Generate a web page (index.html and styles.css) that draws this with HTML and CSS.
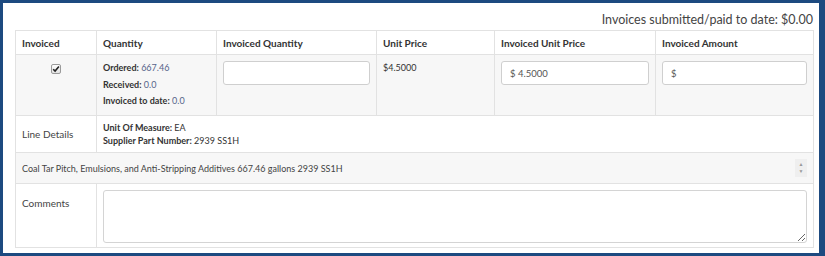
FILE: index.html
```html
<!doctype html>
<html lang="en">

<head>
    <meta charset="UTF-8">
    <title>Invoice line</title>
    <link rel="stylesheet" href="styles.css">
</head>

<body>
    <div class="frame">
        <div class="summary">Invoices submitted/paid to date: $0.00</div>
        <table class="lines">
            <colgroup>
                <col style="width:81px">
                <col style="width:120px">
                <col style="width:160px">
                <col style="width:118px">
                <col style="width:161px">
                <col style="width:158px">
            </colgroup>
            <thead>
                <tr>
                    <th>Invoiced</th>
                    <th>Quantity</th>
                    <th>Invoiced Quantity</th>
                    <th>Unit Price</th>
                    <th>Invoiced Unit Price</th>
                    <th>Invoiced Amount</th>
                </tr>
            </thead>
            <tbody>
                <tr class="item">
                    <td class="center">
                        <span class="check">
                            <svg width="8" height="8" viewBox="0 0 8 8"><path d="M1.2 4.2 L3.1 6.1 L6.9 1.6" fill="none" stroke="#222" stroke-width="1.6"/></svg>
                        </span>
                    </td>
                    <td class="qty">
                        <div><b>Ordered:</b> <span class="val">667.46</span></div>
                        <div><b>Received:</b> <span class="val">0.0</span></div>
                        <div><b>Invoiced to date:</b> <span class="val">0.0</span></div>
                    </td>
                    <td><input class="field" type="text" value=""></td>
                    <td class="qty">$4.5000</td>
                    <td><input class="field" type="text" value="$ 4.5000"></td>
                    <td><input class="field" type="text" value="$"></td>
                </tr>
                <tr class="details">
                    <td class="label middle">Line Details</td>
                    <td colspan="5">
                        <div><b>Unit Of Measure:</b> EA</div>
                        <div><b>Supplier Part Number:</b> 2939 SS1H</div>
                    </td>
                </tr>
                <tr class="desc">
                    <td colspan="6">
                        <div class="desc-box">
                            <span>Coal Tar Pitch, Emulsions, and Anti-Stripping Additives 667.46 gallons 2939 SS1H</span>
                            <span class="spin">&#9650;<br>&#9660;</span>
                        </div>
                    </td>
                </tr>
                <tr class="comments">
                    <td class="label">Comments</td>
                    <td colspan="5"><textarea class="note"></textarea></td>
                </tr>
            </tbody>
        </table>
    </div>
</body>

</html>
```

FILE: styles.css
```css
* {
    margin: 0;
    padding: 0;
    box-sizing: border-box;
}

body {
    font-family: Lato, "Open Sans", sans-serif;
    color: #333;
    background: #fff;
}

.frame {
    width: 825px;
    height: 256px;
    border-style: solid;
    border-color: #1d4a80;
    border-width: 3px 6px 3px 3px;
    padding: 0 6px 0 12px;
}

.summary {
    text-align: right;
    font-size: 12.5px;
    line-height: 17px;
    padding-top: 8px;
    height: 27px;
    color: #444;
}

.lines {
    width: 798px;
    table-layout: fixed;
    border-collapse: collapse;
    font-size: 9px;
}

.lines th,
.lines td {
    border: 1px solid #e2e2e2;
    text-align: left;
    vertical-align: top;
    padding: 5px 6px;
    line-height: 13px;
}

.lines th {
    font-size: 10px;
    font-weight: bold;
    height: 24px;
    padding: 6px 6px 5px;
    line-height: 12px;
}

.lines .label {
    font-size: 10px;
    color: #444;
}

.lines .center {
    text-align: center;
}

.lines .middle {
    vertical-align: middle;
}

/* striped rows */
.item td,
.desc td {
    background: #f7f7f7;
}

.item td {
    height: 61px;
}

.qty {
    line-height: 16.5px !important;
    padding-top: 5px !important;
}

.qty b,
.details b {
    color: #333;
}

.val {
    color: #56648a;
}

.check {
    display: inline-block;
    width: 10px;
    height: 10px;
    margin-top: 4px;
    border: 1px solid #9a9a9a;
    border-radius: 2px;
    background: linear-gradient(#fdfdfd, #e2e2e2);
    line-height: 0;
}

.check svg {
    display: block;
}

.field {
    display: block;
    width: 100%;
    height: 24px;
    margin-top: 1px;
    border: 1px solid #cfcfcf;
    border-radius: 3px;
    padding: 0 8px;
    font-family: Lato, "Open Sans", sans-serif;
    font-size: 9.5px;
    color: #555;
    background: #fff;
}

.details td {
    height: 37px;
    padding-top: 5px;
}

.desc td {
    height: 31px;
    padding: 4px 6px 4px 6px;
}

.desc-box {
    display: flex;
    justify-content: space-between;
    align-items: center;
    height: 22px;
    color: #444;
}

.spin {
    width: 12px;
    font-size: 5px;
    line-height: 7px;
    text-align: center;
    color: #999;
    background: #efefef;
    padding: 2px 0;
}

.comments td {
    height: 64px;
    padding: 6px 6px 4px;
}

.comments .label {
    padding-top: 13px;
}

.note {
    display: block;
    width: 100%;
    height: 53px;
    border: 1px solid #d4d4d4;
    border-radius: 3px;
    font-family: Lato, "Open Sans", sans-serif;
    font-size: 10px;
}
```
